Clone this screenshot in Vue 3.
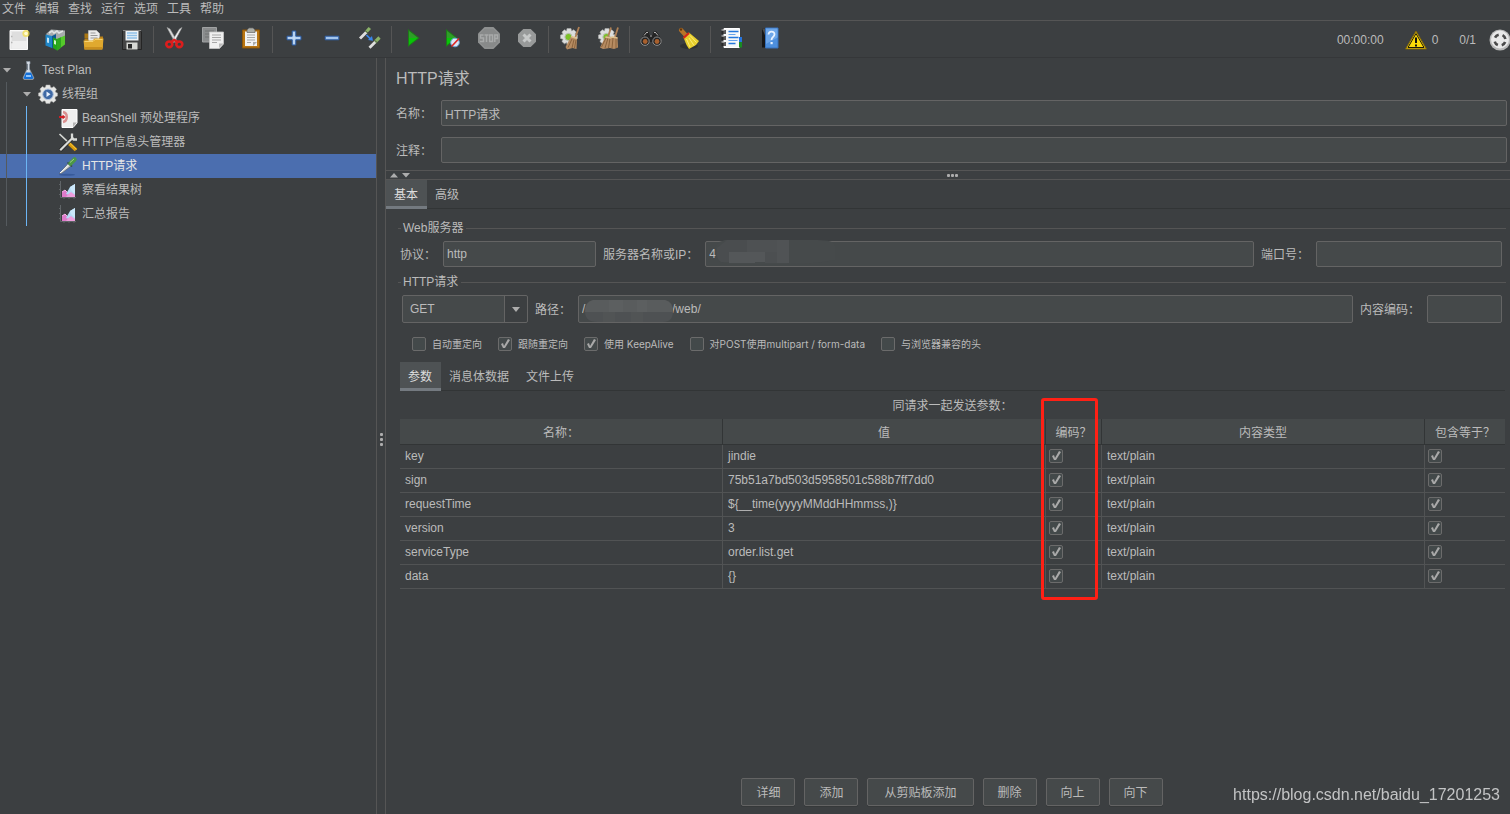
<script setup>
import { ref } from 'vue'

const menus = ['文件', '编辑', '查找', '运行', '选项', '工具', '帮助']

const gear = '<g fill="#dcdedd" stroke="#a9aba9" stroke-width=".6"><path d="M9 2.5h4l.6 2.4 2.2-1.2 2.4 2.4-1.2 2.2 2.4.6v3.6l-2.4.7 1.2 2.2-2.5 2.4-2.1-1.2-.6 2.6H9.3l-.7-2.6-2.2 1.2-2.5-2.4 1.2-2.2-2.6-.7V9l2.6-.7-1.2-2.2 2.5-2.4 2.1 1.2z"/></g><circle cx="10.500" cy="11" r="3.600" fill="#7cc229" stroke="#b9bdb5"/>'
const octagon = (r) => {
  const k = Math.round(r * 4.1) / 10
  return `M${12 - k} ${12 - r}H${12 + k}L${12 + r} ${12 - k}V${12 + k}L${12 + k} ${12 + r}H${12 - k}L${12 - r} ${12 + k}V${12 - k}z`
}
const playShape = '<path d="M7 3L18.500 12L7 21z" fill="#1d7d17"/><path d="M8 5L17 12H8z" fill="#2f9e28"/><path d="M8 12H17L8 19z" fill="#08c408"/>'

const icons = {
  new: '<path d="M3 2.500h17.500v19H3z" fill="#e9e9e9" stroke="#fafafa"/><path d="M5 4h14v16H5z" fill="#dedede"/><path d="M5 13h15v7.500H5z" fill="#efefef"/><path d="M4 8.500h1.500m-1.500 6h1.500" stroke="#b5b5b5" stroke-width="1.500"/><circle cx="19" cy="5.500" r="3.600" fill="#f3df4c" opacity=".75"/><circle cx="19" cy="5.500" r="1.800" fill="#fffbd0"/>',
  templates: '<path d="M2 6l5-4.500 14 1V14l-9 5z" fill="#a6aaac"/><path d="M5 5l3-2 2 2 3-2 2 2 4-2" stroke="#e1e4e5" stroke-width="1.600" fill="none"/><path d="M1.500 6.500L8 8v12l-6.500-2.500z" fill="#1f86c8"/><path d="M8 8l4-2v13l-4 1.500z" fill="#0e5a92"/><path d="M3 9.500l2 .6v5l-2-.7z" fill="#bfe3f6"/><path d="M9 9.500l4 1.500v11.500l-4-2.500z" fill="#23a51c"/><path d="M13 11l8-3.500v9L13 22.500z" fill="#55c92b"/><path d="M13 11l4-1.800v10.500l-4 2.800z" fill="#2da81e"/><path d="M10 12l2 .7v4l-2-.7z" fill="#d5f6ca"/>',
  open: '<path d="M2.500 10V5.500h5L9 7v4z" fill="#a97714"/><path d="M6.500 2.500h8l3 3V15h-11z" fill="#ececec" stroke="#c7c7c7" stroke-width=".7"/><path d="M8.500 5h5M8.500 7.500h7M8.500 10h7" stroke="#999"/><path d="M2.500 10.500h3l1 2.500h10l1.500-4.500h3V20h-18.500z" fill="#ba8119"/><path d="M1.500 12.500h9l2-2h9l-1 11H2.500z" fill="#e0a92f"/><path d="M2.500 13.500h8.500l2-2H20.500" stroke="#f6d271" fill="none"/><path d="M2.500 19h18l-.5 2.500H2.500z" fill="#c98f1f"/>',
  save: '<path d="M3 2.500h17l1.500 1.500v17.500H2.500V3z" fill="#454545" stroke="#252525"/><path d="M5.500 3h13v9.500h-13z" fill="#eef3f7"/><path d="M7 5h10M7 7.500h10M7 10h10" stroke="#8fc0e8" stroke-width="1.300"/><path d="M6.500 14.500h11v7h-11z" fill="#d7d8d4"/><path d="M8 16h4v4.500H8z" fill="#272727"/><path d="M3 2.500h18" stroke="#888"/>',
  cut: '<path d="M4 1.500L7 3l7 12-2 1.500z" fill="#dcdddc" stroke="#9a9a9a" stroke-width=".6"/><path d="M19 1.500L16.500 3 9 15l2 1.500z" fill="#f5f5f5" stroke="#9a9a9a" stroke-width=".6"/><g fill="none" stroke="#dc1d1d" stroke-width="2.600"><ellipse cx="6.300" cy="18.300" rx="3" ry="2.800"/><ellipse cx="16.300" cy="18.300" rx="3" ry="2.800"/><path d="M8 16l3.300-2 3.300 2"/></g>',
  copy: '<path d="M1.500 1.500h14v14.500h-14z" fill="#8a8c8d" stroke="#a0a2a3"/><path d="M4 5h9M4 8h9M4 11h5" stroke="#707273"/><path d="M8.500 6h14v12l-4 4.500h-10z" fill="#efefef" stroke="#c5c5c5" stroke-width=".8"/><path d="M11 9h9M11 11.500h9M11 14h9M11 16.500h5" stroke="#a7a7a7"/><path d="M18 22v-4.500h4.500z" fill="#b9b9b9"/>',
  paste: '<path d="M3.500 4h17v18h-17z" fill="#b87512" stroke="#8a550b"/><path d="M6 5.500h12v14.500H6z" fill="#f2f2f2"/><path d="M8 9h8M8 11.500h8M8 14h8M8 16.500h4" stroke="#a7a7a7"/><path d="M8 6.500V4l2-2h4l2 2v2.500z" fill="#acaea8" stroke="#666" stroke-width=".7"/><path d="M14 20v-4h4z" fill="#aaa"/>',
  plus: '<path d="M10.200 5h3.600v5.200H19v3.600h-5.200V19h-3.600v-5.200H5v-3.600h5.200z" fill="#a3c5ec" stroke="#2a5ba2"/><path d="M12 6v12M6 12h12" stroke="#cde0f5"/>',
  minus: '<path d="M5.200 10.200h13.600v3.600H5.200z" fill="#a3c5ec" stroke="#2a5ba2"/>',
  toggle: '<path d="M2 12.500l6.500-6.500" stroke="#dedede" stroke-width="2.800"/><path d="M8 6.200L11.800 2" stroke="#8bb268" stroke-width="3.200"/><path d="M6.800 4.300l3.500 3" stroke="#4f5f45" stroke-width="1"/><path d="M11.500 21.800l6-6" stroke="#dedede" stroke-width="2.800"/><path d="M17 16l4.500-4.500" stroke="#8bb268" stroke-width="3.200"/><path d="M16 13.800l3.500 3" stroke="#4f5f45" stroke-width="1"/><path d="M8.500 9l4 4" stroke="#3884e8" stroke-width="1.700"/><path d="M15 14.800l-5-.8 4-4z" fill="#3884e8"/>',
  play: playShape,
  playNow: playShape + '<circle cx="16" cy="16.500" r="4.300" fill="#dbe7f6" stroke="#6aa6dd"/><path d="M12.500 20.500l7.500-8" stroke="#dd2727" stroke-width="1.700"/>',
  stop: `<path d="${octagon(11)}" fill="#888a8a"/><path d="${octagon(10)}" fill="none" stroke="#939595"/><g fill="none" stroke="#a8aaaa" stroke-width="1.500"><path d="M6.500 9H3.500v3h3v3.500H3M7.500 9h4M9.500 9v7M12.700 9h2.800v6.500h-2.800zM17.800 16V9h2.700v3.500h-2.700"/></g>`,
  shutdown: `<path d="${octagon(9)}" fill="#989a9a"/><path d="M8.500 8.500l7 7m0-7l-7 7" stroke="#c7c9c9" stroke-width="3"/>`,
  clear: gear + '<path d="M21 1l-3.500 10" stroke="#af8055" stroke-width="1.800"/><path d="M13 10.500l6 2-.5 10.500-4-1-5.500 1.500-1.500-2.500z" fill="#b68b61"/><path d="M14 13l-4 8.500M16 13.500l-2 8.500M18 14l-1.500 8" stroke="#7f5933" stroke-width=".8"/><path d="M13 10.500l6 2" stroke="#dec18e" stroke-width="1.500"/>',
  clearAll: gear + '<path d="M15 1.500L12 11M22 1.500L19 11" stroke="#af8055" stroke-width="1.800"/><path d="M9.500 10.500l12 1 .5 10-4 1.500-4-1-7 1-3-1.500z" fill="#b68b61"/><path d="M10 12l-4.500 9M12 12l-3 10M14 12l-1.500 10M17 12l-1 10M20 12v10" stroke="#7f5933" stroke-width=".8"/><path d="M9.500 11l5 1 1.500-1 5.500 1" stroke="#dec18e" stroke-width="1.300" fill="none"/>',
  search: '<path d="M4 9l3-4 3 1 .5 3h3L14 6l3-1 3 4 3 7-5 3-4-3h-4l-4 3-5-3z" fill="#242424"/><path d="M5 9.500l3-3.500 1 1M19 9.500L16 6l-1 1M11 10h2" stroke="#b5b5b5" fill="none"/><circle cx="6" cy="15.200" r="4.200" fill="#242424" stroke="#909090"/><circle cx="18" cy="15.200" r="4.200" fill="#242424" stroke="#909090"/><circle cx="6.200" cy="15.500" r="2.400" fill="#a8602e"/><circle cx="18" cy="15.500" r="2.400" fill="#a8602e"/>',
  broom: '<ellipse cx="12" cy="20" rx="9" ry="3" fill="#2f3132"/><path d="M4 4l5 5.500" stroke="#b87428" stroke-width="4.200" stroke-linecap="round"/><circle cx="4" cy="3.500" r="1.200" fill="#60350b"/><path d="M6.500 11.500l5.500-5L22 15l-3 4-7 4-2.500-4z" fill="#e7ce2c"/><path d="M9.500 13l3.500 8M12 12l5 7.500M13 9.500l6.500 7" stroke="#fbed76"/><path d="M6.500 12l5.500-5" stroke="#d62718" stroke-width="2.200"/>',
  functions: '<path d="M4 2.500h15.500v19H4z" fill="#f5f7f8" stroke="#fff"/><path d="M19 11h3v5h-3z" fill="#2675df"/><path d="M19 16h3v5.500h-3z" fill="#188b22"/><path d="M8.500 5.500h10M8.500 11.500h10M8.500 17.500h7" stroke="#2477dc" stroke-width="1.300"/><path d="M8.500 8.500h7M8.500 14.500h9" stroke="#66a3ec"/><path d="M1.500 5H6M1.500 7H6M1.500 11H6M1.500 13H6M1.500 17H6M1.500 19H6" stroke="#222" stroke-width="1.400"/><path d="M1.500 4h3M1.500 10h3M1.500 16h3" stroke="#ddd"/>',
  help: '<path d="M4 2.500h4.500v19H4z" fill="#171717"/><path d="M4 2.500h3.500v8z" fill="#4b4b4b"/><path d="M7.500 2H20v20H7.500z" fill="#4d8fdd" stroke="#3671bc"/><path d="M8 2.500h11.500v9L8 18z" fill="#6da6e8"/><path d="M10.500 8.500c.2-3.800 6-3.800 6-.3 0 2.800-3 2.500-3 5.800" fill="none" stroke="#e8f2ff" stroke-width="1.800"/><path d="M12.500 16h2.200v2.200h-2.200z" fill="#e8f2ff"/>',
}

const toolGroups = [
  [['new', '新建'], ['templates', '模板'], ['open', '打开'], ['save', '保存']],
  [['cut', '剪切'], ['copy', '复制'], ['paste', '粘贴']],
  [['plus', '展开'], ['minus', '折叠'], ['toggle', '切换']],
  [['play', '启动'], ['playNow', '不停顿开始'], ['stop', '停止'], ['shutdown', '关闭']],
  [['clear', '清除'], ['clearAll', '清除全部']],
  [['search', '查找'], ['broom', '重置搜索']],
  [['functions', '函数助手'], ['help', '帮助']],
]

const treeIcons = {
  plan: '<path d="M8.500 1.500h3.500v2l-.5 1v4.500l4.500 9-1 1.500H6l-1-1.500 4-9V4.500z" fill="#d5dce4" stroke="#8a95a1" stroke-width=".7"/><path d="M8 12.500h5l2.500 5.500-1 1H6.500l-1-1z" fill="#1670d6"/><path d="M8 16h5" stroke="#8fc4fb" stroke-width="2"/><path d="M9.500 4v6" stroke="#77828e"/>',
  threads: '<path d="M8 1h4l.6 2.200 1.300.6 2-1.200 2.600 2.600-1.200 2 .6 1.300L19.500 9v3l-2 .8-.6 1.400 1.200 2-2.500 2.300-2-1.200-1.300.6L12 19.500H8l-.6-2.100-1.300-.6-2 1.200-2.500-2.400 1.100-2-.6-1.300L.5 12V9l1.900-.6.6-1.400-1.100-2 2.500-2.400 2 1.100 1.200-.6z" fill="#e6e7e5" stroke="#aaa" stroke-width=".5"/><circle cx="10" cy="10.300" r="5.300" fill="#3e69a5" stroke="#b5c6de"/><path d="M8.500 7.500v5.500l4-2.700z" fill="#e9f2ff"/>',
  bean: '<path d="M4 1.500h15V15l-4 4.500H4z" fill="#efefef" stroke="#fff"/><path d="M15 19v-4.500h4z" fill="#b5b5b5"/><path d="M5 4c5 1 5 9 0 10" fill="none" stroke="#d99090" stroke-width="2.500"/><path d="M1 9h5" stroke="#cf1f25" stroke-width="2"/><path d="M4.500 6.500L7.500 9l-3 2.500z" fill="#cf1f25"/>',
  header: '<path d="M1.500 2l8.500 8" stroke="#d6d8d4" stroke-width="1.700"/><path d="M10 10.500l8 7.500" stroke="#d99b0b" stroke-width="3.600"/><path d="M10.500 10l8 7.500" stroke="#f8c73b"/><path d="M2 18.500L15 5.500" stroke="#222" stroke-width="3.600"/><path d="M2.200 18.200L15 5.500" stroke="#dadcd9" stroke-width="2.300"/><path d="M14 1.500v4l1.500 2H19" fill="none" stroke="#dadcd9" stroke-width="2.300"/>',
  http: '<ellipse cx="9" cy="18.700" rx="8" ry="1" fill="#375a9a"/><path d="M1.500 17.500L10 7.500l3 2.500-9 7z" fill="#d0d4cf" stroke="#5b626a" stroke-width=".7"/><path d="M2 17l8.500-8" stroke="#fff"/><path d="M9.500 6.500l4.500 4" stroke="#33463a" stroke-width="1.600"/><path d="M12.500 7.500l4-4" stroke="#4c9745" stroke-width="4.500" stroke-linecap="round"/><path d="M12 6.500L16 3" stroke="#9bd189"/>',
  chart: '<path d="M2.500 1v16.500H18M1 4.500h1.500M1 9.500h1.500M1 14.500h1.500M6 17.500V19m5-1.500V19m5-1.500V19" stroke="#606568" fill="none"/><path d="M4 17v-5l3-2 3 3v4z" fill="#df7acb"/><path d="M4 12l3-2 3 3" stroke="#f6b6e8" fill="none"/><path d="M8 14l4-7 5-3v13z" fill="#b6dcf6"/><path d="M8 17l3-3.500 2-1.500 4 3v2z" fill="#ee9edd"/><path d="M12 7l5-3v10l-2-2-2-2z" fill="#cbe8fb"/>',
}

const samplers = [
  { icon: 'bean', text: 'BeanShell 预处理程序' },
  { icon: 'header', text: 'HTTP信息头管理器' },
  { icon: 'http', text: 'HTTP请求', selected: true },
  { icon: 'chart', text: '察看结果树' },
  { icon: 'chart', text: '汇总报告' },
]

const form = ref({
  name: 'HTTP请求',
  comment: '',
  protocol: 'http',
  server: '4',
  port: '',
  method: 'GET',
  path: '/' + '\u00a0'.repeat(26) + '/web/',
  encoding: '',
})

const options = ref([
  { text: '自动重定向', on: false },
  { text: '跟随重定向', on: true },
  { text: '使用 KeepAlive', on: true },
  { text: '对POST使用multipart / form-data', on: false },
  { text: '与浏览器兼容的头', on: false },
])

const params = ref([
  ['key', 'jindie'],
  ['sign', '75b51a7bd503d5958501c588b7ff7dd0'],
  ['requestTime', '${__time(yyyyMMddHHmmss,)}'],
  ['version', '3'],
  ['serviceType', 'order.list.get'],
  ['data', '{}'],
].map(([name, value]) => ({ name, value, encode: true, equals: true })))

const actions = ['详细', '添加', '从剪贴板添加', '删除', '向上', '向下']
</script>

<template>
  <div class="app">
    <nav class="menubar">
      <button v-for="m in menus" :key="m" type="button">{{ m }}</button>
    </nav>

    <header class="toolbar">
      <div v-for="(group, i) in toolGroups" :key="i" class="group">
        <button v-for="[id, label] in group" :key="id" type="button" :aria-label="label">
          <svg viewBox="0 0 24 24" width="24" height="24" v-html="icons[id]"></svg>
        </button>
      </div>
      <div class="status">
        <span class="timer">00:00:00</span>
        <svg class="warn" viewBox="0 0 22 20" width="22" height="20">
          <path d="M11 1L21.500 19H.5z" fill="#f5cd13" stroke="#7a6208" stroke-linejoin="round" />
          <path d="M11 3.500L19 17.500H3z" fill="#fbd90a" stroke="#1d1b0d" />
          <path d="M11 7.500v5.500M11 14.500v2" stroke="#111" stroke-width="2" />
        </svg>
        <span class="errors">0</span>
        <span class="threads">0/1</span>
        <svg viewBox="0 0 21 22" width="21" height="22">
          <circle cx="11" cy="11" r="10.500" fill="#b9b9b9" />
          <circle cx="11" cy="10.500" r="9" fill="#e9e9e9" />
          <circle cx="11" cy="11" r="5.500" fill="none" stroke="#4a4a4a" stroke-width="2.600" stroke-dasharray="4.600 4.040" stroke-dashoffset="-2" />
        </svg>
      </div>
    </header>

    <div class="body">
      <aside class="tree">
        <div class="row level0">
          <svg class="arrow" viewBox="0 0 10 10" width="10" height="10"><path d="M1 3h8L5 7.500z" fill="#adadad" /></svg>
          <svg viewBox="0 0 20 20" width="20" height="20" v-html="treeIcons.plan"></svg>
          <span>Test Plan</span>
        </div>
        <div class="branch outer">
          <div class="row level1">
            <svg class="arrow" viewBox="0 0 10 10" width="10" height="10"><path d="M1 3h8L5 7.500z" fill="#adadad" /></svg>
            <svg viewBox="0 0 20 20" width="20" height="20" v-html="treeIcons.threads"></svg>
            <span>线程组</span>
          </div>
          <div class="branch inner">
            <div v-for="s in samplers" :key="s.text" class="row level2" :class="{ selected: s.selected }">
              <svg viewBox="0 0 20 20" width="20" height="20" v-html="treeIcons[s.icon]"></svg>
              <span>{{ s.text }}</span>
            </div>
          </div>
        </div>
      </aside>

      <div class="divider"><i></i><i></i><i></i></div>

      <main class="editor">
        <section class="head">
          <h1>HTTP请求</h1>
          <div class="line">
            <label for="name">名称：</label>
            <input id="name" v-model="form.name" class="grow" type="text">
          </div>
          <div class="line">
            <label for="comment">注释：</label>
            <input id="comment" v-model="form.comment" class="grow" type="text">
          </div>
        </section>

        <div class="splitter">
          <svg viewBox="0 0 20 8" width="20" height="8">
            <path d="M0 6.500h8L4 2z M12 2h8l-4 4.500z" fill="#adadad" />
          </svg>
          <span class="dots"><i></i><i></i><i></i></span>
        </div>

        <div class="tabs">
          <button type="button" class="active">基本</button>
          <button type="button">高级</button>
        </div>

        <fieldset class="web">
          <legend>Web服务器</legend>
          <div class="line">
            <label for="protocol">协议：</label>
            <input id="protocol" v-model="form.protocol" class="protocol" type="text">
            <label for="server">服务器名称或IP：</label>
            <div class="masked grow">
              <input id="server" v-model="form.server" type="text">
              <svg class="mask server-mask" viewBox="0 0 120 26" width="120" height="26" aria-hidden="true">
                <path d="M10 0h92q18 0 18 6v14q-20 4-50 4H14Q0 22 0 12T10 0z" fill="#464a4b" />
                <path d="M12 0h20v12H14v10H6Q0 18 2 8z" fill="#4a4d4f" />
                <path d="M32 0h30v12H32z" fill="#4e5153" />
                <path d="M14 12h36v10H40v1H14z" fill="#545759" />
                <path d="M50 12h12v11H50z" fill="#4c4f51" />
                <path d="M62 0h12v23H62z" fill="#505355" />
              </svg>
            </div>
            <label for="port">端口号：</label>
            <input id="port" v-model="form.port" class="port" type="text">
          </div>
        </fieldset>

        <fieldset class="request">
          <legend>HTTP请求</legend>
          <div class="line tall">
            <div class="combo">
              <select id="method" v-model="form.method" aria-label="方法">
                <option>GET</option>
                <option>POST</option>
              </select>
              <svg viewBox="0 0 10 6" width="10" height="6"><path d="M1 0h8L5 5z" fill="#adadad" /></svg>
            </div>
            <label for="path">路径：</label>
            <div class="masked grow">
              <input id="path" v-model="form.path" type="text">
              <svg class="mask path-mask" viewBox="0 0 88 22" width="88" height="22" aria-hidden="true">
                <path d="M10 0h68q10 0 10 11t-10 11H12Q0 22 0 11T10 0z" fill="#4e5153" />
                <path d="M8 0h72q8 2 8 12H0Q0 2 8 0z" fill="#595c5d" />
                <path d="M24 0h14v12H24zM52 0h10v12H52z" fill="#5c5f60" />
                <path d="M18 12h12v10H18zM46 12h12v10H46z" fill="#515455" />
              </svg>
            </div>
            <label for="encoding">内容编码：</label>
            <input id="encoding" v-model="form.encoding" class="encoding" type="text">
          </div>
          <div class="options">
            <label v-for="o in options" :key="o.text">
              <input v-model="o.on" type="checkbox">{{ o.text }}
            </label>
          </div>
        </fieldset>

        <section class="parameters">
          <div class="tabs">
            <button type="button" class="active">参数</button>
            <button type="button">消息体数据</button>
            <button type="button">文件上传</button>
          </div>
          <table>
            <caption>同请求一起发送参数：</caption>
            <colgroup>
              <col><col><col class="narrow"><col><col class="medium">
            </colgroup>
            <thead>
              <tr>
                <th>名称：</th>
                <th>值</th>
                <th class="marked">编码？<span class="highlight"></span></th>
                <th>内容类型</th>
                <th>包含等于？</th>
              </tr>
            </thead>
            <tbody>
              <tr v-for="p in params" :key="p.name">
                <td>{{ p.name }}</td>
                <td>{{ p.value }}</td>
                <td class="check"><input v-model="p.encode" type="checkbox" :aria-label="p.name + ' 编码'"></td>
                <td>text/plain</td>
                <td class="check"><input v-model="p.equals" type="checkbox" :aria-label="p.name + ' 包含等于'"></td>
              </tr>
            </tbody>
          </table>
        </section>

        <footer class="actions">
          <button v-for="a in actions" :key="a" type="button" :class="{ long: a.length > 2 }">{{ a }}</button>
        </footer>
      </main>
    </div>

    <div class="watermark">https://blog.csdn.net/baidu_17201253</div>
  </div>
</template>

<style>
body {
  background: #3c3f41;
}
</style>

<style scoped>
.app,
.app * {
  box-sizing: border-box;
}
.app {
  display: flex;
  flex-direction: column;
  min-height: 100vh;
  overflow: hidden;
  background: #3c3f41;
  color: #bbbbbb;
  font: 12px/16px "Liberation Sans", "Noto Sans CJK SC", sans-serif;
}
button,
input,
select {
  margin: 0;
  padding: 0;
  border: 0;
  background: none;
  color: inherit;
  font: inherit;
}
svg {
  display: block;
  flex: none;
}

.menubar {
  display: flex;
  gap: 9px;
  height: 21px;
  padding: 0 2px 2px;
  border-bottom: 1px solid #555555;
}

.toolbar {
  display: flex;
  align-items: center;
  height: 37px;
  padding-top: 1px;
  border-bottom: 1px solid #353739;
}
.group {
  display: flex;
}
.group button {
  display: flex;
  justify-content: center;
  width: 38px;
}
.group:first-child button:first-child {
  width: 37px;
}
.group + .group::before {
  content: "";
  width: 1px;
  height: 27px;
  margin: 0 2px;
  background: #555555;
}
.status {
  display: flex;
  align-items: center;
  margin-left: auto;
}
.warn {
  margin: 0 5px 0 21px;
}
.threads {
  margin: 0 13px 0 21px;
}

.body {
  display: flex;
  flex: 1;
}
.tree {
  flex: 0 0 377px;
  border-right: 1px solid #555555;
}
.row {
  display: flex;
  align-items: center;
  gap: 4px;
  height: 24px;
}
.arrow {
  margin-right: 2px;
}
.level0 {
  padding-left: 2px;
}
.level1 {
  padding-left: 22px;
}
.level2 {
  padding-left: 58px;
}
.selected {
  background: #4b6eaf;
  color: #e6e6e6;
}
.branch {
  position: relative;
}
.branch::before {
  content: "";
  position: absolute;
  top: 0;
  bottom: 0;
  width: 1px;
  background: #555a5e;
}
.outer::before {
  left: 6px;
  z-index: 1;
}
.inner::before {
  left: 26px;
  background: #6cb5f5;
}

.divider {
  display: flex;
  flex: 0 0 9px;
  flex-direction: column;
  align-items: center;
  justify-content: center;
  gap: 2px;
  padding-top: 6px;
  border-right: 1px solid #555555;
}
.divider i,
.dots i {
  width: 3px;
  height: 3px;
  border-radius: 1px;
  background: #adadad;
}

.editor {
  display: flex;
  flex: 1;
  flex-direction: column;
  min-width: 0;
}
.head {
  display: flex;
  flex-direction: column;
  gap: 11px;
  padding: 11px 3px 7px 10px;
}
h1 {
  margin: 0;
  font-size: 16px;
  font-weight: 400;
  line-height: 20px;
}
.line {
  display: flex;
  align-items: center;
  gap: 7px;
}
.head .line {
  gap: 9px;
}
.line label {
  flex: none;
  padding-top: 2px;
}
.line input {
  width: 100%;
  min-width: 0;
  height: 26px;
  padding: 0 3px;
  border: 1px solid #646464;
  border-radius: 2px;
  background: #45494a;
}
.line.tall input {
  height: 28px;
}
.line .grow {
  flex: 1;
}
.line .protocol {
  flex: 0 0 153px;
}
.line .port {
  flex: 0 0 186px;
}
.line .encoding {
  flex: 0 0 75px;
}
.masked {
  position: relative;
  display: flex;
}
.mask {
  position: absolute;
}
.server-mask {
  top: -1px;
  left: 10px;
}
.path-mask {
  top: 5px;
  left: 7px;
}

.splitter {
  position: relative;
  height: 10px;
  padding-left: 4px;
  border: solid #555555;
  border-width: 1px 0;
}
.dots {
  position: absolute;
  top: 3px;
  right: 0;
  left: 8px;
  display: flex;
  justify-content: center;
  gap: 1px;
}

.tabs {
  display: flex;
  height: 29px;
  box-shadow: inset 0 -1px #323536;
}
.tabs button {
  padding: 0 9px 0 8px;
}
.tabs .active {
  border-bottom: 3px solid #747a80;
  padding-top: 3px;
  background: #4e5254;
  color: #dddddd;
}

fieldset {
  min-width: 0;
  margin: 11px 4px 0 12px;
  padding: 5px 4px 0 2px;
  border: solid #555555;
  border-width: 1px 0 0;
}
.request {
  margin-top: 7px;
  padding-left: 4px;
}
legend {
  height: 16px;
  margin-left: 1px;
  padding: 0 3px 0 2px;
}
.request legend {
  margin-left: -1px;
}
.combo {
  position: relative;
  flex: 0 0 126px;
}
.combo select {
  display: block;
  width: 100%;
  height: 28px;
  padding: 0 7px;
  border: 1px solid #646464;
  border-radius: 2px;
  background: linear-gradient(90deg, #45494a 101px, #646464 101px, #646464 102px, #3c3f41 102px);
  appearance: none;
}
.combo svg {
  position: absolute;
  top: 12px;
  right: 7px;
  pointer-events: none;
}

.options {
  display: flex;
  gap: 16px;
  padding: 14px 0 0 10px;
  font-family: Inter, "Noto Sans CJK SC", sans-serif;
  font-size: 10px;
  line-height: 14px;
}
.options label {
  display: flex;
  gap: 6px;
  white-space: nowrap;
}
input[type="checkbox"] {
  display: block;
  flex: none;
  width: 14px;
  height: 14px;
  border: 1px solid #6b6b6b;
  border-radius: 2px;
  background: #43494a;
  appearance: none;
}
input[type="checkbox"]:checked::before {
  content: "";
  display: block;
  width: 12px;
  height: 12px;
  background: #a9a9a9;
  clip-path: polygon(2px 6px, 4px 5px, 5px 8px, 9px 1px, 11px 2px, 6px 10px, 4px 10px);
}

.parameters {
  margin: 11px 5px 0 14px;
}
table {
  width: 100%;
  border-spacing: 0;
  table-layout: fixed;
}
caption {
  height: 28px;
  padding-top: 2px;
  line-height: 26px;
}
.narrow {
  width: 56px;
}
.medium {
  width: 80px;
}
th {
  height: 26px;
  padding: 2px 0 0;
  border: solid #323536;
  border-width: 0 1px 1px 0;
  background: #45494a;
  font-weight: 400;
}
td {
  height: 24px;
  padding: 0 5px 2px;
  border: solid #515354;
  border-width: 0 1px 1px 0;
}
th:last-child,
td:last-child {
  border-right: 0;
}
td.check {
  padding: 0 3px 1px;
}
.marked {
  position: relative;
}
.highlight {
  position: absolute;
  top: -21px;
  left: -5px;
  width: 57px;
  height: 202px;
  border: 3px solid #ff2015;
  border-radius: 3px;
}

.actions {
  display: flex;
  justify-content: center;
  gap: 9px;
  margin-top: auto;
  padding: 16px 0 8px 8px;
}
.actions button {
  height: 28px;
  padding: 2px 14px 0;
  border: 1px solid #646464;
  border-radius: 2px;
  background: #45494a;
  box-shadow: 0 1px #36393a;
}
.actions .long {
  padding: 2px 16px 0;
}

.watermark {
  position: fixed;
  right: 10px;
  bottom: 9px;
  color: #c3c4c5;
  font-size: 16px;
  line-height: 20px;
}
</style>
